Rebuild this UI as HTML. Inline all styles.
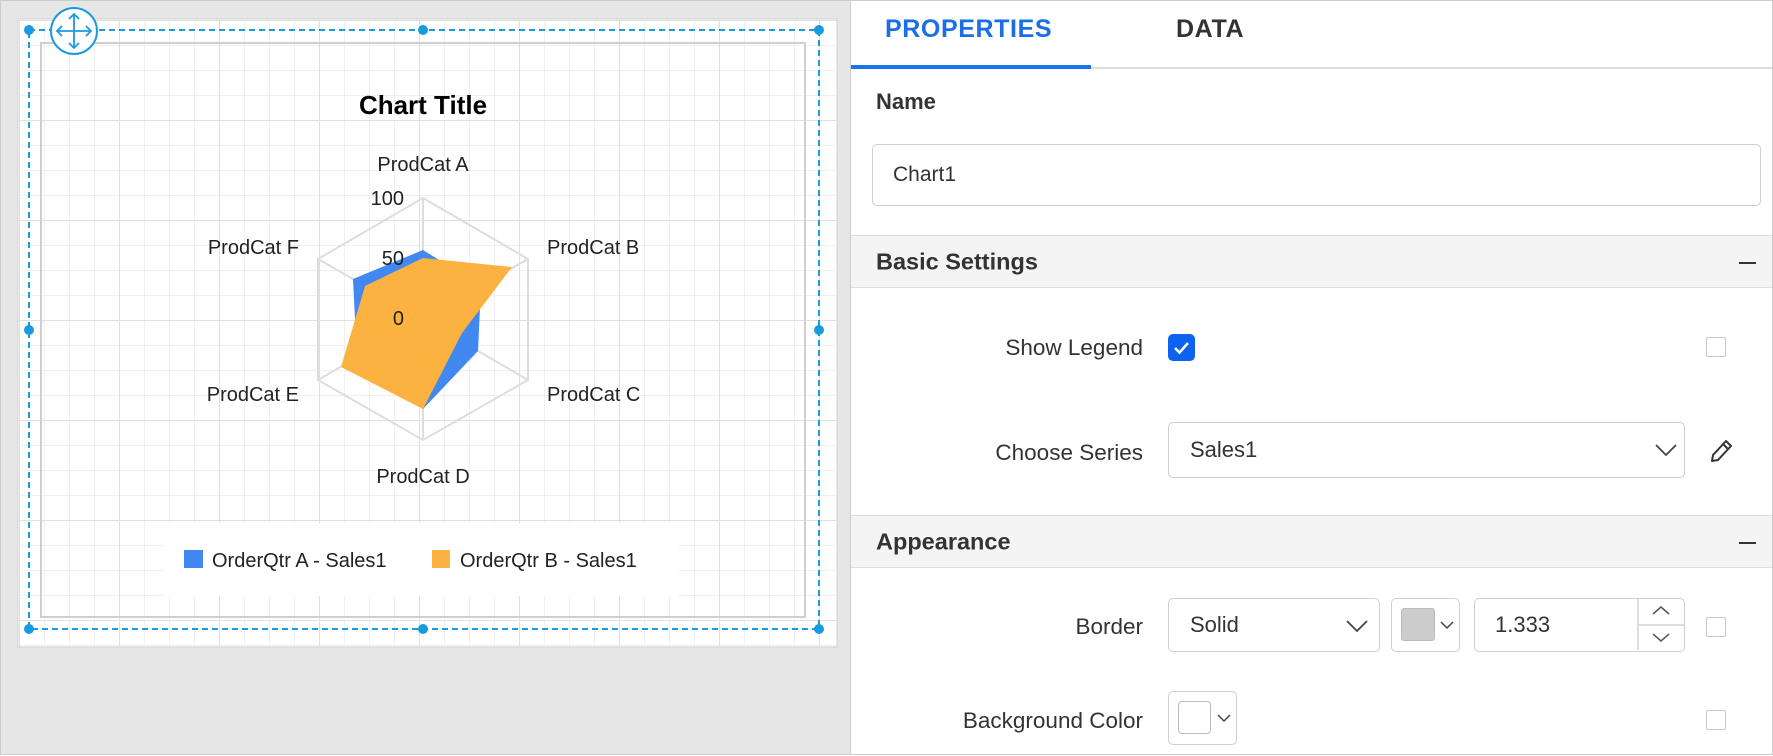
<!DOCTYPE html>
<html><head><meta charset="utf-8"><style>
*{box-sizing:border-box;margin:0;padding:0}
body{width:1773px;height:755px;overflow:hidden;font-family:"Liberation Sans",sans-serif;background:#fff;position:relative}
.abs{position:absolute}
.left{left:0;top:0;width:850px;height:755px;background:#e6e6e6;border:1px solid #ccc;border-right:none}
.right{left:850px;top:0;width:923px;height:755px;background:#fff;border:1px solid #ccc}
.lbl{position:absolute;right:629px;font-size:22.5px;color:#333;text-align:right;white-space:nowrap;transform:translateY(-50%)}
.box{position:absolute;border:1.5px solid #cfcfcf;border-radius:5px;background:#fff}
.hdr{position:absolute;left:0;width:921px;background:#f4f4f4;border-top:1.5px solid #ddd;border-bottom:1.5px solid #ddd}
.hdr span{position:absolute;left:25px;top:50%;transform:translateY(-50%);font-size:23.5px;font-weight:bold;color:#333}
.hdr i{position:absolute;right:16px;top:50%;width:17px;height:2.5px;background:#333}
.cb{position:absolute;width:20px;height:20px;border:1.5px solid #c8c8c8;border-radius:2px;background:#fff}
.ct{font-size:20px;fill:#222;font-family:"Liberation Sans",sans-serif}
</style></head><body>
<div class="abs left">
<svg class="abs" style="left:0;top:0" width="850" height="755">
<defs>
<pattern id="mn" x="18" y="19" width="25" height="25" patternUnits="userSpaceOnUse"><path d="M0 0H25M0 0V25" stroke="#ececec" stroke-width="1.5" fill="none"/></pattern>
<pattern id="mj" x="18" y="19" width="100" height="100" patternUnits="userSpaceOnUse"><path d="M0 0H100M0 0V100" stroke="#e0e0e0" stroke-width="2" fill="none"/></pattern>
</defs>
<rect x="17" y="18" width="819" height="628" fill="#fff" stroke="#d0d0d0"/>
<rect x="17" y="18" width="819" height="628" fill="url(#mn)"/>
<rect x="17" y="18" width="819" height="628" fill="url(#mj)"/>
<rect x="40" y="42" width="764" height="574" fill="none" stroke="#cfcfcf" stroke-width="2"/>
<rect x="163" y="522" width="514" height="73" fill="#fff"/>
<text x="422" y="113" text-anchor="middle" font-size="26" font-weight="bold" fill="#000" font-family="Liberation Sans,sans-serif">Chart Title</text>
<g stroke="#ddd" stroke-width="2" fill="none">
<polygon points="422,197 527,258 527,379 422,439 317,379 317,258"/>
<path d="M422 318L422 197M422 318L527 258M422 318L527 379M422 318L422 439M422 318L317 379M422 318L317 258"/>
</g>
<polygon points="422,249 480,285 477,350 422,408 355,338 352,278" fill="#4189f0"/>
<polygon points="422,257 511,266 461,332 422,408 340,366 364,285" fill="#fbb240"/>
<text class="ct" x="422" y="170" text-anchor="middle">ProdCat A</text>
<text class="ct" x="546" y="253">ProdCat B</text>
<text class="ct" x="546" y="400">ProdCat C</text>
<text class="ct" x="422" y="482" text-anchor="middle">ProdCat D</text>
<text class="ct" x="298" y="400" text-anchor="end">ProdCat E</text>
<text class="ct" x="298" y="253" text-anchor="end">ProdCat F</text>
<text class="ct" x="403" y="204" text-anchor="end">100</text>
<text class="ct" x="403" y="264" text-anchor="end">50</text>
<text class="ct" x="403" y="324" text-anchor="end">0</text>
<rect x="183" y="549" width="19" height="18" fill="#4189f0"/>
<text class="ct" x="211" y="566">OrderQtr A - Sales1</text>
<rect x="431" y="549" width="18" height="18" fill="#fbb240"/>
<text class="ct" x="459" y="566">OrderQtr B - Sales1</text>
<rect x="28" y="29" width="790" height="599" fill="none" stroke="#1a9be0" stroke-width="2" stroke-dasharray="6,4"/>
<g fill="#1a9be0">
<circle cx="28" cy="29" r="5"/><circle cx="422" cy="29" r="5"/><circle cx="818" cy="29" r="5"/>
<circle cx="28" cy="329" r="5"/><circle cx="818" cy="329" r="5"/>
<circle cx="28" cy="628" r="5"/><circle cx="422" cy="628" r="5"/><circle cx="818" cy="628" r="5"/>
</g>
<circle cx="73" cy="30" r="23" fill="#fff" stroke="#1a9be0" stroke-width="2"/>
<g stroke="#1a9be0" stroke-width="1.8" fill="none">
<path d="M73 13V47M56 30H90"/>
<path d="M68 18L73 13L78 18M68 42L73 47L78 42M61 25L56 30L61 35M85 25L90 30L85 35"/>
</g>
</svg>
</div>
<div class="abs right">
<div class="abs" style="left:34px;top:14px;font-size:25px;font-weight:bold;color:#1a6fe8;letter-spacing:0.6px">PROPERTIES</div>
<div class="abs" style="left:325px;top:14px;font-size:25px;font-weight:bold;color:#333;letter-spacing:0.6px">DATA</div>
<div class="abs" style="left:0;top:66px;width:921px;height:1.5px;background:#ddd"></div>
<div class="abs" style="left:0;top:64px;width:240px;height:4px;background:#1a73e8"></div>
<div class="abs" style="left:25px;top:88px;font-size:22px;font-weight:bold;color:#333">Name</div>
<div class="box" style="left:21px;top:143px;width:889px;height:62px"><span class="abs" style="left:20px;top:18px;font-size:21px;color:#333">Chart1</span></div>
<div class="hdr" style="top:234px;height:53px"><span>Basic Settings</span><i></i></div>
<div class="lbl" style="top:347px">Show Legend</div>
<div class="abs" style="left:317px;top:333px;width:27px;height:27px;background:#0d62f0;border-radius:5px"><svg width="27" height="27"><path d="M7 14L11.5 18.5L20 9" stroke="#fff" stroke-width="2.5" fill="none"/></svg></div>
<div class="cb" style="left:855px;top:336px"></div>
<div class="lbl" style="top:452px">Choose Series</div>
<div class="box" style="left:317px;top:421px;width:517px;height:56px"><span class="abs" style="left:21px;top:14px;font-size:22px;color:#333">Sales1</span>
<svg class="abs" style="left:485px;top:18px" width="24" height="16"><path d="M2 4L12 14L22 4" stroke="#444" stroke-width="1.8" fill="none"/></svg></div>
<svg class="abs" style="left:857px;top:436px" width="26" height="28"><path d="M4 24L5 18L18 4L23 9L10 23Z M15 7L20 12" stroke="#333" stroke-width="2" fill="none" stroke-linejoin="round"/></svg>
<div class="hdr" style="top:514px;height:53px"><span>Appearance</span><i></i></div>
<div class="lbl" style="top:626px">Border</div>
<div class="box" style="left:317px;top:597px;width:212px;height:54px"><span class="abs" style="left:21px;top:13px;font-size:22px;color:#333">Solid</span>
<svg class="abs" style="left:176px;top:18px" width="24" height="16"><path d="M2 4L12 14L22 4" stroke="#444" stroke-width="1.8" fill="none"/></svg></div>
<div class="box" style="left:540px;top:597px;width:69px;height:54px"><div class="abs" style="left:9px;top:9px;width:34px;height:33px;background:#ccc;border-radius:3px;border:1px solid #bbb"></div>
<svg class="abs" style="left:48px;top:21px" width="14" height="10"><path d="M1 2L7 8L13 2" stroke="#444" stroke-width="1.5" fill="none"/></svg></div>
<div class="box" style="left:623px;top:597px;width:211px;height:54px"><span class="abs" style="left:20px;top:13px;font-size:22px;color:#333">1.333</span>
<div class="abs" style="left:162px;top:0;width:1.5px;height:51px;background:#ddd"></div>
<div class="abs" style="left:162px;top:25px;width:47px;height:1.5px;background:#ddd"></div>
<svg class="abs" style="left:176px;top:6px" width="20" height="12"><path d="M2 9L10 2L18 9" stroke="#555" stroke-width="1.5" fill="none"/></svg>
<svg class="abs" style="left:176px;top:32px" width="20" height="12"><path d="M2 3L10 10L18 3" stroke="#555" stroke-width="1.5" fill="none"/></svg></div>
<div class="cb" style="left:855px;top:616px"></div>
<div class="lbl" style="top:720px">Background Color</div>
<div class="box" style="left:317px;top:690px;width:69px;height:54px"><div class="abs" style="left:9px;top:9px;width:33px;height:33px;background:#fff;border-radius:4px;border:1.5px solid #bbb"></div>
<svg class="abs" style="left:48px;top:21px" width="14" height="10"><path d="M1 2L7 8L13 2" stroke="#444" stroke-width="1.5" fill="none"/></svg></div>
<div class="cb" style="left:855px;top:709px"></div>
</div>
</body></html>
